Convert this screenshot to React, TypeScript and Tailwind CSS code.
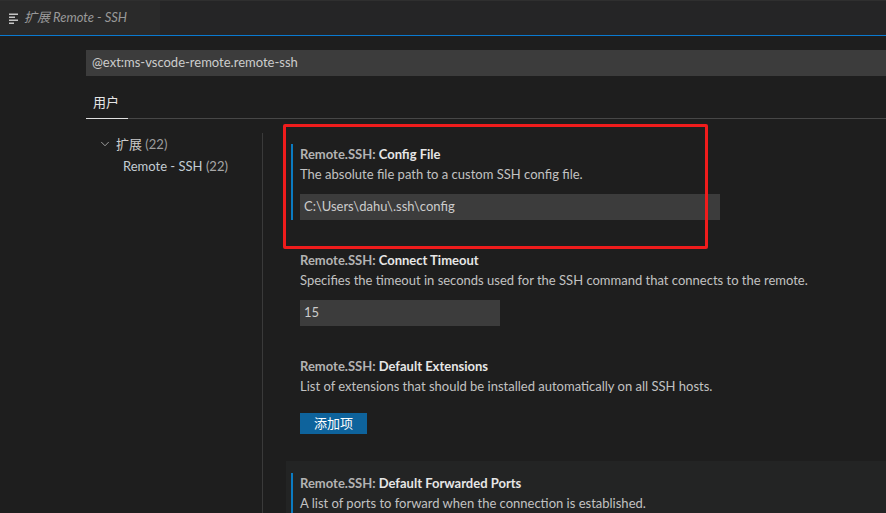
import { ChevronDown } from "lucide-react";

const font = {
  fontFamily: '"Lato", "Noto Sans CJK SC", sans-serif',
};

const TabIcon = () => (
  <svg width="10" height="11" viewBox="0 0 10 11" className="shrink-0">
    <rect x="0" y="0.5" width="9" height="1.5" fill="#c5c5c5" />
    <rect x="0" y="3.5" width="6" height="1.5" fill="#c5c5c5" />
    <rect x="0" y="6.5" width="9" height="1.5" fill="#c5c5c5" />
    <rect x="0" y="9.5" width="5" height="1.5" fill="#c5c5c5" />
  </svg>
);

type Setting = {
  name: string;
  desc: string;
  control: "input" | "button" | "none";
  value?: string;
  inputWidth?: string;
  focused?: boolean;
  hovered?: boolean;
};

const settings: Setting[] = [
  {
    name: "Config File",
    desc: "The absolute file path to a custom SSH config file.",
    control: "input",
    value: "C:\\Users\\dahu\\.ssh\\config",
    inputWidth: "w-[420px]",
    focused: true,
  },
  {
    name: "Connect Timeout",
    desc: "Specifies the timeout in seconds used for the SSH command that connects to the remote.",
    control: "input",
    value: "15",
    inputWidth: "w-[200px]",
  },
  {
    name: "Default Extensions",
    desc: "List of extensions that should be installed automatically on all SSH hosts.",
    control: "button",
  },
  {
    name: "Default Forwarded Ports",
    desc: "A list of ports to forward when the connection is established.",
    control: "none",
    focused: true,
    hovered: true,
  },
];

const SettingRow = ({ s }: { s: Setting }) => (
  <div
    className={`pl-[5px] pt-[12px] ${s.control === "button" ? "pb-[27px]" : "pb-[18px]"} ${
      s.hovered ? "bg-[#232424]" : ""
    }`}
  >
    <div
      className={`border-l-2 pl-[7px] ${
        s.focused ? "border-[#0b7bc1]" : "border-transparent"
      }`}
    >
      <div className="text-[13px] leading-[20px] font-bold whitespace-nowrap">
        <span className="text-[#b3b3b3]">Remote.SSH: </span>
        <span className="text-[#e6e6e6]">{s.name}</span>
      </div>
      <div className="text-[13px] leading-[20px] text-[#c2c2c2] whitespace-nowrap">
        {s.desc}
      </div>
      {s.control === "input" && (
        <div
          className={`${s.inputWidth} mt-[10px] h-[26px] bg-[#3c3c3c] pl-[4px] flex items-center text-[13px] text-[#cccccc]`}
        >
          {s.value}
        </div>
      )}
      {s.control === "button" && (
        <div className="mt-[17px] w-[67px] h-[21px] bg-[#0e639c] flex items-center justify-center text-[13px] text-white">
          添加项
        </div>
      )}
    </div>
  </div>
);

export default function App() {
  return (
    <div
      className="w-[886px] h-[513px] bg-[#1e1e1e] overflow-hidden relative flex flex-col"
      style={font}
    >
      {/* tab bar */}
      <div className="h-[35px] bg-[#252526] border-t border-[#2f2f2f] flex shrink-0">
        <div className="w-[160px] bg-[#2a2a2a] flex items-center pl-[9px] gap-[5px]">
          <TabIcon />
          <span className="italic text-[13px] text-[#999999] whitespace-nowrap">
            扩展 Remote - SSH
          </span>
        </div>
      </div>
      <div className="h-px bg-[#0a7ad1] shrink-0" />

      {/* header */}
      <div className="pl-[86px] pt-[14px] shrink-0">
        <div className="h-[26px] bg-[#3c3c3c] flex items-center pl-[6px] text-[13px] text-[#cccccc] whitespace-nowrap">
          @ext:ms-vscode-remote.remote-ssh
        </div>
        <div className="pt-[17px] pb-[7px] pl-[7px] text-[13px] leading-[18px] text-[#e7e7e7]">
          用户
        </div>
        <div className="flex h-px">
          <div className="w-[42px] bg-[#e0e0e0]" />
          <div className="flex-1 bg-[#474747]" />
        </div>
      </div>

      {/* body */}
      <div className="flex flex-1 pl-[86px] min-h-0">
        <div className="w-[176px] pt-[14px] text-[13px] leading-[22px] shrink-0">
          <div className="flex items-center pl-[12px] gap-[4px] text-[#cccccc] whitespace-nowrap">
            <ChevronDown size={14} strokeWidth={1.3} className="text-[#c5c5c5]" />
            <span>
              扩展 <span className="text-[#9d9d9d]">(22)</span>
            </span>
          </div>
          <div className="pl-[37px] text-[#c3ccd3] whitespace-nowrap">
            Remote - SSH <span className="text-[#a7a7a7]">(22)</span>
          </div>
        </div>
        <div className="mt-[14px] w-px bg-[#3a3a3a] shrink-0" />
        <div className="flex-1 pl-[23px] pt-[13px] min-w-0">
          {settings.map((s) => (
            <SettingRow key={s.name} s={s} />
          ))}
        </div>
      </div>

      {/* red annotation box */}
      <div className="absolute left-[283px] top-[124px] w-[425px] h-[125px] border-[3px] border-[#f01c1c] rounded-[2px]" />
    </div>
  );
}
